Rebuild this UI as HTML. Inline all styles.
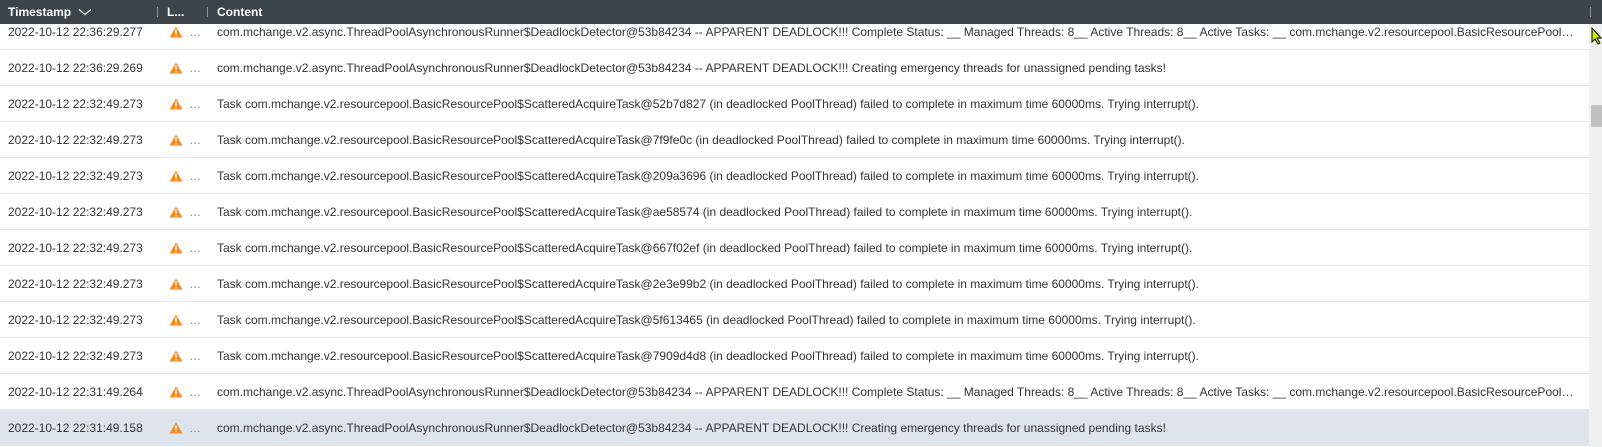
<!DOCTYPE html>
<html><head><meta charset="utf-8"><style>
*{margin:0;padding:0;box-sizing:border-box}
body{width:1602px;height:447px;overflow:hidden;background:#fff;font-family:"Liberation Sans",Arial,sans-serif;font-size:12px;color:#333;position:relative}
.hdr{position:absolute;left:0;top:0;width:1602px;height:24px;background:#3b4446;color:#fff;font-weight:bold;font-size:12px;z-index:2}
.hdr span{position:absolute;top:5px}
.sep{position:absolute;top:7px;width:1px;height:10px;background:#8a9193}
.rows{position:absolute;left:0;top:14px;width:1589px}
.row{height:36px;border-bottom:1px solid #e8e8e8;position:relative;white-space:nowrap}
.row.sel{background:#dde4ec}
.ts{position:absolute;left:8px;top:11px}
.ic{position:absolute;left:169px;top:12px}
.el{position:absolute;left:189px;top:11px;color:#5b7fa6}
.ct{position:absolute;left:217px;top:11px;width:1363px;overflow:hidden;text-overflow:ellipsis}
.sb{position:absolute;left:1589px;top:24px;width:13px;height:423px;background:#f0f0f0;z-index:1}
.th{position:absolute;left:1591px;top:105px;width:11px;height:22px;background:#c1c1c1;z-index:1}
</style></head><body>
<div class="hdr">
<span style="left:8px">Timestamp</span>
<svg style="position:absolute;left:78px;top:8px" width="14" height="8" viewBox="0 0 14 8"><path d="M1 1.5 L7 6.5 L13 1.5" stroke="#fff" stroke-width="1.2" fill="none"/></svg>
<div class="sep" style="left:157px"></div>
<span style="left:167px">L...</span>
<div class="sep" style="left:207px"></div>
<span style="left:217px">Content</span>
<div class="sep" style="left:1590px"></div>
</div>
<div class="rows">
<div class="row"><span class="ts">2022-10-12 22:36:29.277</span><svg class="ic" width="14" height="12" viewBox="0 0 14 12"><path d="M7 0.5 L13.5 11.5 L0.5 11.5Z" fill="#f58a1f"/><rect x="6.3" y="3.5" width="1.4" height="4.5" fill="#fff"/><rect x="6.3" y="9" width="1.4" height="1.4" fill="#fff"/></svg><span class="el">…</span><span class="ct">com.mchange.v2.async.ThreadPoolAsynchronousRunner$DeadlockDetector@53b84234 -- APPARENT DEADLOCK!!! Complete Status: __ Managed Threads: 8__ Active Threads: 8__ Active Tasks: __ com.mchange.v2.resourcepool.BasicResourcePool$ScatteredAcquireTask@52b7d827</span></div>
<div class="row"><span class="ts">2022-10-12 22:36:29.269</span><svg class="ic" width="14" height="12" viewBox="0 0 14 12"><path d="M7 0.5 L13.5 11.5 L0.5 11.5Z" fill="#f58a1f"/><rect x="6.3" y="3.5" width="1.4" height="4.5" fill="#fff"/><rect x="6.3" y="9" width="1.4" height="1.4" fill="#fff"/></svg><span class="el">…</span><span class="ct">com.mchange.v2.async.ThreadPoolAsynchronousRunner$DeadlockDetector@53b84234 -- APPARENT DEADLOCK!!! Creating emergency threads for unassigned pending tasks!</span></div>
<div class="row"><span class="ts">2022-10-12 22:32:49.273</span><svg class="ic" width="14" height="12" viewBox="0 0 14 12"><path d="M7 0.5 L13.5 11.5 L0.5 11.5Z" fill="#f58a1f"/><rect x="6.3" y="3.5" width="1.4" height="4.5" fill="#fff"/><rect x="6.3" y="9" width="1.4" height="1.4" fill="#fff"/></svg><span class="el">…</span><span class="ct">Task com.mchange.v2.resourcepool.BasicResourcePool$ScatteredAcquireTask@52b7d827 (in deadlocked PoolThread) failed to complete in maximum time 60000ms. Trying interrupt().</span></div>
<div class="row"><span class="ts">2022-10-12 22:32:49.273</span><svg class="ic" width="14" height="12" viewBox="0 0 14 12"><path d="M7 0.5 L13.5 11.5 L0.5 11.5Z" fill="#f58a1f"/><rect x="6.3" y="3.5" width="1.4" height="4.5" fill="#fff"/><rect x="6.3" y="9" width="1.4" height="1.4" fill="#fff"/></svg><span class="el">…</span><span class="ct">Task com.mchange.v2.resourcepool.BasicResourcePool$ScatteredAcquireTask@7f9fe0c (in deadlocked PoolThread) failed to complete in maximum time 60000ms. Trying interrupt().</span></div>
<div class="row"><span class="ts">2022-10-12 22:32:49.273</span><svg class="ic" width="14" height="12" viewBox="0 0 14 12"><path d="M7 0.5 L13.5 11.5 L0.5 11.5Z" fill="#f58a1f"/><rect x="6.3" y="3.5" width="1.4" height="4.5" fill="#fff"/><rect x="6.3" y="9" width="1.4" height="1.4" fill="#fff"/></svg><span class="el">…</span><span class="ct">Task com.mchange.v2.resourcepool.BasicResourcePool$ScatteredAcquireTask@209a3696 (in deadlocked PoolThread) failed to complete in maximum time 60000ms. Trying interrupt().</span></div>
<div class="row"><span class="ts">2022-10-12 22:32:49.273</span><svg class="ic" width="14" height="12" viewBox="0 0 14 12"><path d="M7 0.5 L13.5 11.5 L0.5 11.5Z" fill="#f58a1f"/><rect x="6.3" y="3.5" width="1.4" height="4.5" fill="#fff"/><rect x="6.3" y="9" width="1.4" height="1.4" fill="#fff"/></svg><span class="el">…</span><span class="ct">Task com.mchange.v2.resourcepool.BasicResourcePool$ScatteredAcquireTask@ae58574 (in deadlocked PoolThread) failed to complete in maximum time 60000ms. Trying interrupt().</span></div>
<div class="row"><span class="ts">2022-10-12 22:32:49.273</span><svg class="ic" width="14" height="12" viewBox="0 0 14 12"><path d="M7 0.5 L13.5 11.5 L0.5 11.5Z" fill="#f58a1f"/><rect x="6.3" y="3.5" width="1.4" height="4.5" fill="#fff"/><rect x="6.3" y="9" width="1.4" height="1.4" fill="#fff"/></svg><span class="el">…</span><span class="ct">Task com.mchange.v2.resourcepool.BasicResourcePool$ScatteredAcquireTask@667f02ef (in deadlocked PoolThread) failed to complete in maximum time 60000ms. Trying interrupt().</span></div>
<div class="row"><span class="ts">2022-10-12 22:32:49.273</span><svg class="ic" width="14" height="12" viewBox="0 0 14 12"><path d="M7 0.5 L13.5 11.5 L0.5 11.5Z" fill="#f58a1f"/><rect x="6.3" y="3.5" width="1.4" height="4.5" fill="#fff"/><rect x="6.3" y="9" width="1.4" height="1.4" fill="#fff"/></svg><span class="el">…</span><span class="ct">Task com.mchange.v2.resourcepool.BasicResourcePool$ScatteredAcquireTask@2e3e99b2 (in deadlocked PoolThread) failed to complete in maximum time 60000ms. Trying interrupt().</span></div>
<div class="row"><span class="ts">2022-10-12 22:32:49.273</span><svg class="ic" width="14" height="12" viewBox="0 0 14 12"><path d="M7 0.5 L13.5 11.5 L0.5 11.5Z" fill="#f58a1f"/><rect x="6.3" y="3.5" width="1.4" height="4.5" fill="#fff"/><rect x="6.3" y="9" width="1.4" height="1.4" fill="#fff"/></svg><span class="el">…</span><span class="ct">Task com.mchange.v2.resourcepool.BasicResourcePool$ScatteredAcquireTask@5f613465 (in deadlocked PoolThread) failed to complete in maximum time 60000ms. Trying interrupt().</span></div>
<div class="row"><span class="ts">2022-10-12 22:32:49.273</span><svg class="ic" width="14" height="12" viewBox="0 0 14 12"><path d="M7 0.5 L13.5 11.5 L0.5 11.5Z" fill="#f58a1f"/><rect x="6.3" y="3.5" width="1.4" height="4.5" fill="#fff"/><rect x="6.3" y="9" width="1.4" height="1.4" fill="#fff"/></svg><span class="el">…</span><span class="ct">Task com.mchange.v2.resourcepool.BasicResourcePool$ScatteredAcquireTask@7909d4d8 (in deadlocked PoolThread) failed to complete in maximum time 60000ms. Trying interrupt().</span></div>
<div class="row"><span class="ts">2022-10-12 22:31:49.264</span><svg class="ic" width="14" height="12" viewBox="0 0 14 12"><path d="M7 0.5 L13.5 11.5 L0.5 11.5Z" fill="#f58a1f"/><rect x="6.3" y="3.5" width="1.4" height="4.5" fill="#fff"/><rect x="6.3" y="9" width="1.4" height="1.4" fill="#fff"/></svg><span class="el">…</span><span class="ct">com.mchange.v2.async.ThreadPoolAsynchronousRunner$DeadlockDetector@53b84234 -- APPARENT DEADLOCK!!! Complete Status: __ Managed Threads: 8__ Active Threads: 8__ Active Tasks: __ com.mchange.v2.resourcepool.BasicResourcePool$ScatteredAcquireTask@52b7d827</span></div>
<div class="row sel"><span class="ts">2022-10-12 22:31:49.158</span><svg class="ic" width="14" height="12" viewBox="0 0 14 12"><path d="M7 0.5 L13.5 11.5 L0.5 11.5Z" fill="#f58a1f"/><rect x="6.3" y="3.5" width="1.4" height="4.5" fill="#fff"/><rect x="6.3" y="9" width="1.4" height="1.4" fill="#fff"/></svg><span class="el">…</span><span class="ct">com.mchange.v2.async.ThreadPoolAsynchronousRunner$DeadlockDetector@53b84234 -- APPARENT DEADLOCK!!! Creating emergency threads for unassigned pending tasks!</span></div>
</div>
<div class="sb"></div><div class="th"></div>
<svg style="position:absolute;left:1591px;top:27px;z-index:3" width="11" height="18" viewBox="0 0 11 18"><path d="M1 1 L1 15 L4 12 L7 17 L9 16 L6 11 L10 11 Z" fill="#c8f000" stroke="#000" stroke-width="1"/></svg>
</body></html>
